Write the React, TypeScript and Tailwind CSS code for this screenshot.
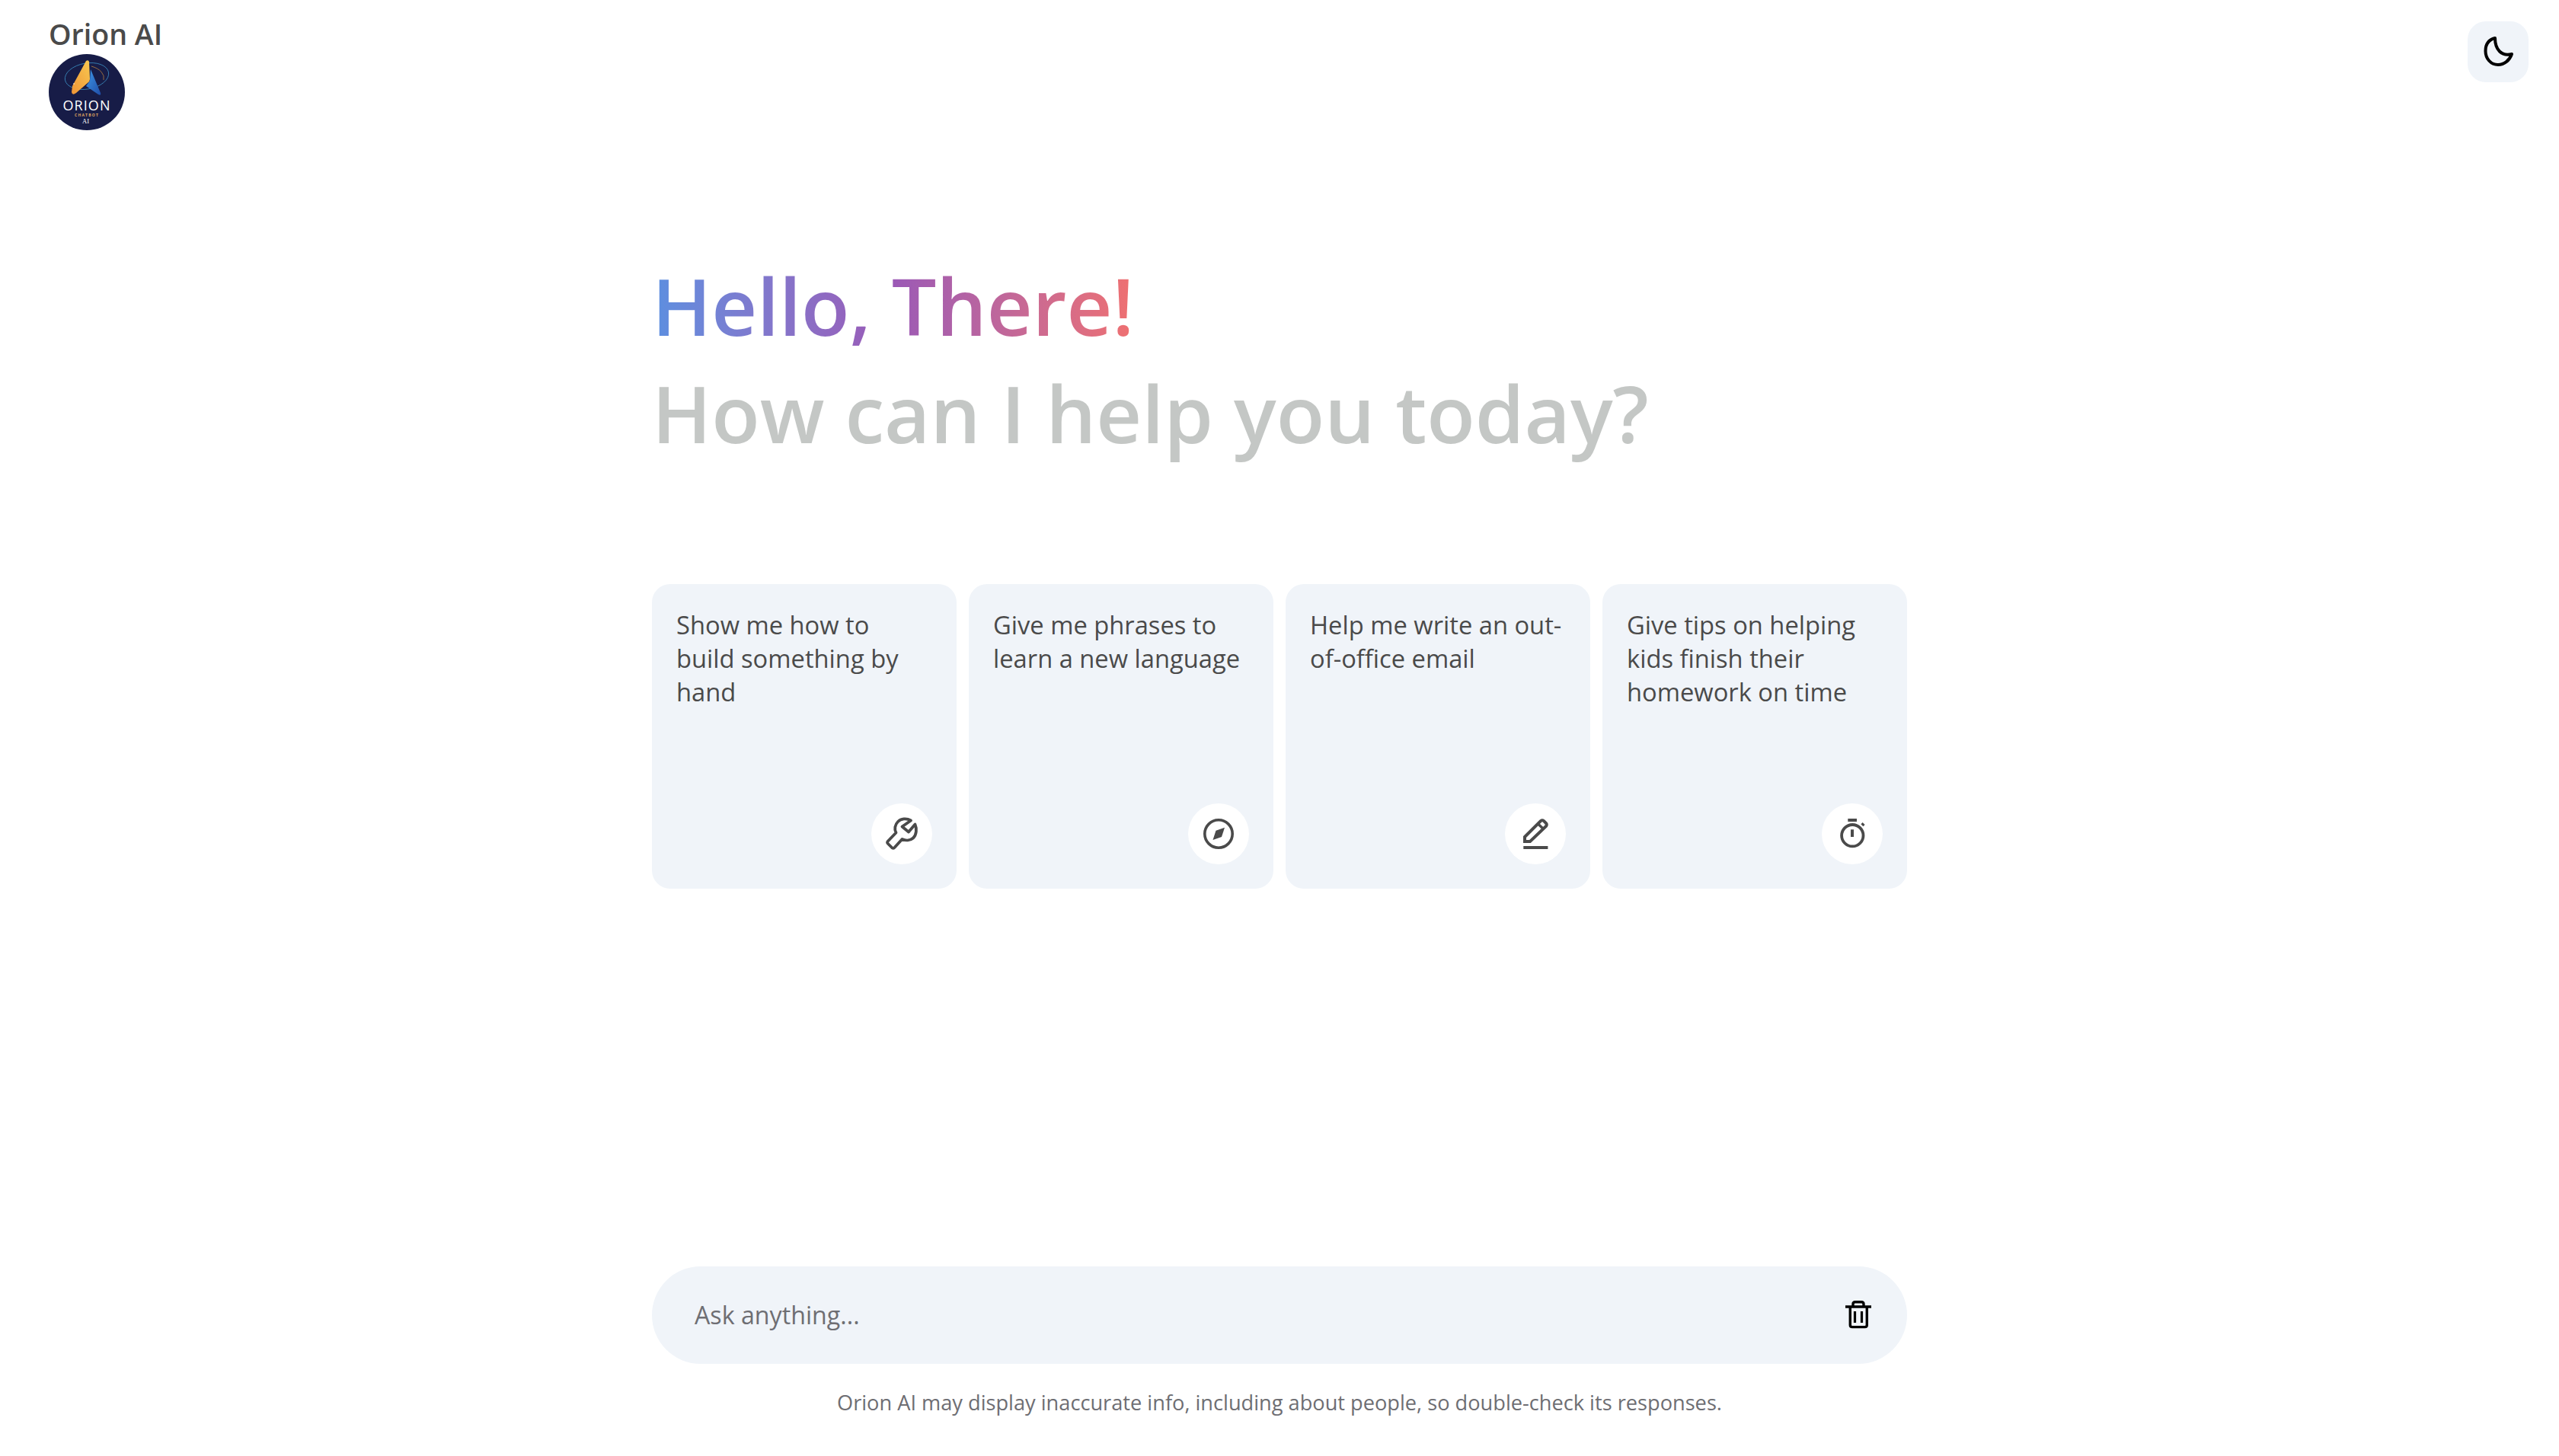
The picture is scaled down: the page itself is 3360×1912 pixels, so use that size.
const font = { fontFamily: '"Open Sans", sans-serif' };

function Logo() {
  return (
    <svg width="100" height="100" viewBox="0 0 100 100" className="block">
      <defs>
        <linearGradient id="lgo" x1="0" y1="1" x2="1" y2="0">
          <stop offset="0" stopColor="#ef9536" />
          <stop offset="1" stopColor="#f8c850" />
        </linearGradient>
        <linearGradient id="lgb" x1="0" y1="0" x2="1" y2="1">
          <stop offset="0" stopColor="#3f9ae8" />
          <stop offset="1" stopColor="#1f4da8" />
        </linearGradient>
      </defs>
      <circle cx="50" cy="50" r="50" fill="#171c47" />
      <ellipse cx="50" cy="29" rx="29" ry="17" fill="none" stroke="#3b8cc0" strokeWidth="0.8" transform="rotate(-10 50 29)" />
      <path d="M56 16 A29 17 0 0 1 72 34" fill="none" stroke="#b8803f" strokeWidth="0.8" />
      <path d="M49 42 L65 53 Q69 55 68 51 L55 20 L54 35 Z" fill="url(#lgb)" />
      <path d="M49 9 Q52 7 53 10 L54 33 Q54 36 51 38 L36 51 Q31 55 30 50 L31 42 Z" fill="url(#lgo)" />
      <circle cx="33" cy="39" r="0.8" fill="#ffffff" />
      <text x="50" y="73.5" textAnchor="middle" fontSize="18" fill="#ffffff" fontFamily="Open Sans, sans-serif" letterSpacing="1.1">ORION</text>
      <text x="50" y="82" textAnchor="middle" fontSize="5" fontWeight="700" fill="#e0a860" fontFamily="Open Sans, sans-serif" letterSpacing="1.2">CHATBOT</text>
      <text x="48.5" y="91" textAnchor="middle" fontSize="8.5" fill="#ffffff" fontFamily="Liberation Serif, serif">AI</text>
    </svg>
  );
}

function Moon() {
  return (
    <svg width="48" height="48" viewBox="0 0 48 48" fill="none" stroke="#000" strokeWidth="4" strokeLinejoin="round">
      <path d="M20 6 C12 8 7.5 14 7.5 23 C7.5 33 14.5 41 24 41 C32 41 39 35.5 42 27 C36 28.5 30 27.5 26 23.5 C22 19.5 20 13 20 6 Z" />
    </svg>
  );
}

function Trash() {
  return (
    <svg width="48" height="48" viewBox="0 0 48 48" fill="none" stroke="#000" strokeWidth="3.4" strokeLinejoin="round">
      <path d="M7 13 H41" />
      <path d="M17 13 V9.5 Q17 6.7 20 6.7 H28 Q31 6.7 31 9.5 V13" />
      <path d="M13.3 13 V37 Q13.3 39.6 16 39.6 H32.6 Q35.3 39.6 35.3 37 V13" />
      <path d="M19.5 19 V34 M28.5 19 V34" strokeWidth="3.2" />
    </svg>
  );
}

function Wrench() {
  return (
    <svg width="48" height="48" viewBox="0 0 48 48" fill="none" stroke="currentColor" strokeWidth="3.8" strokeLinejoin="round">
      <path d="M36 6.5 C30 3 23 4 19 8 C15 12 14 18 16.5 22.5 L5.5 34 Q4.5 35.5 6 37 L11.5 42.5 Q13 43.5 14.5 42 L24.5 31 C29 33 35 33 39 29.5 C43.5 25.5 44 17 41.5 11.5 L33 21.5 L24.5 14.5 Z" />
    </svg>
  );
}

function Compass() {
  return (
    <svg width="48" height="48" viewBox="0 0 48 48" fill="currentColor">
      <circle cx="24" cy="24" r="18.2" fill="none" stroke="currentColor" strokeWidth="3.6" />
      <path d="M32 15.7 L28 28 L16.5 32 L20.5 19.7 Z" />
    </svg>
  );
}

function Pen() {
  return (
    <svg width="48" height="48" viewBox="0 0 48 48" fill="none" stroke="currentColor" strokeWidth="4" strokeLinejoin="miter">
      <path d="M10 28 L31 7 Q33 5.5 35 7 L38 10 Q39.5 12 38 14 L17 34 H10 Z" />
      <path d="M27.5 11 L34.5 17.5" strokeWidth="3.4" />
      <path d="M8.3 42 H40.4" strokeWidth="4" />
    </svg>
  );
}

function Timer() {
  return (
    <svg width="48" height="48" viewBox="0 0 48 48" fill="none" stroke="currentColor" strokeWidth="3.8">
      <path d="M18.3 6 H30" strokeWidth="4" />
      <circle cx="24.3" cy="26.2" r="14.2" />
      <path d="M24 18.3 V28" strokeWidth="4" />
      <path d="M36.5 10.2 L39.5 13.2" strokeWidth="3.2" />
    </svg>
  );
}

const cards = [
  { text: "Show me how to build something by hand", Icon: Wrench },
  { text: "Give me phrases to learn a new language", Icon: Compass },
  { text: "Help me write an out-of-office email", Icon: Pen },
  { text: "Give tips on helping kids finish their homework on time", Icon: Timer },
];

export default function App() {
  return (
    <div className="flex h-[1912px] flex-col overflow-hidden bg-white" style={font}>
      <header className="flex items-start justify-between pl-16 pr-10 pt-7">
        <div className="flex flex-col">
          <h1 className="mt-[-3px] text-[37.6px] font-semibold leading-[40px] text-[#4a4a4a]">Orion AI</h1>
          <div className="mt-[6px]">
            <Logo />
          </div>
        </div>
        <button className="flex h-20 w-20 items-center justify-center rounded-3xl bg-[#f0f4f9]">
          <Moon />
        </button>
      </header>

      <main className="mx-auto mt-[159px] w-[1648px]">
        <div className="w-fit bg-gradient-to-r from-[#5b8fe0] via-[#9b59b6] to-[#ef7070] bg-clip-text text-[104px] font-semibold leading-[141px] text-transparent">
          Hello, There!
        </div>
        <div className="text-[104px] font-semibold leading-[141px] text-[#c4c7c5]">How can I help you today?</div>

        <div className="mt-[155px] grid grid-cols-4 gap-4">
          {cards.map(({ text, Icon }) => (
            <div key={text} className="flex h-[400px] flex-col justify-between rounded-3xl bg-[#f0f4f9] p-8">
              <p className="text-[32.7px] leading-[44px] text-[#4a4a4a]">{text}</p>
              <div className="flex justify-end">
                <div className="flex h-20 w-20 items-center justify-center rounded-full bg-white text-[#4a4a4a]">
                  <Icon />
                </div>
              </div>
            </div>
          ))}
        </div>
      </main>

      <footer className="mx-auto mt-auto w-[1648px] pb-[51px]">
        <div className="flex h-32 items-center justify-between rounded-[64px] bg-[#f0f4f9] pl-14 pr-10">
          <span className="text-[32.2px] text-[#6e6e73]">Ask anything...</span>
          <Trash />
        </div>
        <p className="mt-[32px] text-center text-[27.2px] leading-[38px] text-[#6e6e73]">
          Orion AI may display inaccurate info, including about people, so double-check its responses.
        </p>
      </footer>
    </div>
  );
}
